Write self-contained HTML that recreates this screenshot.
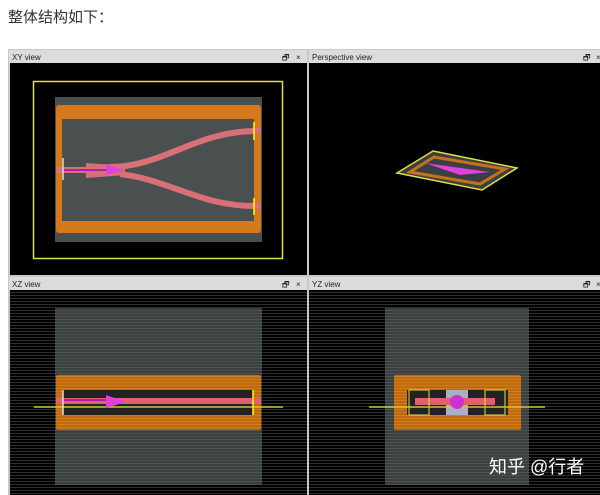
<!DOCTYPE html>
<html><head><meta charset="utf-8"><style>
body{margin:0;width:600px;height:495px;background:#fff;overflow:hidden;position:relative;font-family:"Liberation Sans","Noto Sans CJK SC",sans-serif}
.t{position:absolute;left:8px;top:6px;font-size:15px;color:#333}
svg{position:absolute;left:0;top:0}
</style></head><body>
<div class="t">整体结构如下：</div>
<svg width="600" height="495" viewBox="0 0 600 495">
<defs>
<pattern id="st" width="4" height="3" patternUnits="userSpaceOnUse"><rect width="4" height="3" fill="#000"/><rect y="1" width="4" height="1" fill="#2e2e2e"/></pattern>
<pattern id="sg" width="4" height="3" patternUnits="userSpaceOnUse"><rect width="4" height="3" fill="#3a4040"/><rect y="1" width="4" height="1" fill="#4c5252"/></pattern>
<pattern id="so" width="4" height="3" patternUnits="userSpaceOnUse"><rect width="4" height="3" fill="#c06a10"/><rect y="1" width="4" height="1" fill="#d47c1a"/></pattern>
</defs>
<rect x="8" y="49" width="592" height="446" fill="#c8c8c8"/>
<rect x="9" y="50" width="298" height="13" fill="#dcdcdc"/>
<rect x="309" y="50" width="291" height="13" fill="#dcdcdc"/>
<rect x="9" y="277" width="298" height="13" fill="#dcdcdc"/>
<rect x="309" y="277" width="291" height="13" fill="#dcdcdc"/>
<g font-size="8" fill="#222" font-family="Liberation Sans,sans-serif">
<text x="12" y="60">XY view</text><text x="312" y="60">Perspective view</text>
<text x="12" y="287">XZ view</text><text x="312" y="287">YZ view</text>
<text x="282" y="60">🗗</text><text x="296" y="60">×</text>
<text x="583" y="60">🗗</text><text x="596" y="60">×</text>
<text x="282" y="287">🗗</text><text x="296" y="287">×</text>
<text x="583" y="287">🗗</text><text x="596" y="287">×</text>
</g>
<rect x="10" y="63" width="297" height="212" fill="#000"/>
<rect x="33.5" y="81.5" width="249" height="177" fill="none" stroke="#e0e040" stroke-width="1.5"/>
<rect x="55" y="97" width="207" height="145" fill="#4a5050"/>
<rect x="56" y="105" width="205" height="128" rx="3" fill="#d6791a"/>
<rect x="62" y="119" width="192" height="102" fill="#4a5050"/>
<g fill="none" stroke="#d87078" stroke-width="6">
<path d="M56 170 H88 C100 166 110 168 125 166 C170 160 200 132 254 131 H261"/>
<path d="M120 174 C170 180 200 206 254 206 H261"/>
</g>
<path d="M86 163 L125 166 L125 175 L86 178 Z" fill="#d87078"/>
<line x1="62" y1="170" x2="110" y2="170" stroke="#b020b0" stroke-width="2"/>
<path d="M106 164 L124 170 L106 175 Z" fill="#e040e0"/>
<line x1="63" y1="158" x2="63" y2="180" stroke="#ddd" stroke-width="1.5"/>
<line x1="254" y1="122" x2="254" y2="140" stroke="#ff0" stroke-width="1.5"/>
<line x1="254" y1="198" x2="254" y2="215" stroke="#ff0" stroke-width="1.5"/>
<rect x="309" y="63" width="291" height="212" fill="#000"/>
<path d="M433 151 L517 168 L482 190 L397 173 Z" fill="#3a3f3f" stroke="#e0e040" stroke-width="1.5"/>
<path d="M434 157 L505 169 L480 184 L410 172 Z" fill="none" stroke="#c87020" stroke-width="3"/>
<path d="M425 163 L475 170 L490 172 L460 175 Z" fill="#e040e0"/>
<rect x="10" y="290" width="297" height="205" fill="url(#st)"/>
<rect x="55" y="308" width="207" height="177" fill="url(#sg)"/>
<rect x="56" y="375" width="205" height="55" rx="2" fill="url(#so)"/>
<rect x="63" y="390" width="190" height="25" fill="#222"/>
<rect x="56" y="398" width="205" height="6" fill="#e06070"/>
<line x1="34" y1="407" x2="283" y2="407" stroke="#c8c840" stroke-width="1.5"/>
<line x1="63" y1="400" x2="110" y2="400" stroke="#b020b0" stroke-width="2"/>
<path d="M106 395 L126 402 L106 408 Z" fill="#e040e0"/>
<line x1="63" y1="390" x2="63" y2="415" stroke="#ddd" stroke-width="1.5"/>
<line x1="253" y1="390" x2="253" y2="415" stroke="#ff0" stroke-width="1.5"/>
<rect x="309" y="290" width="291" height="205" fill="url(#st)"/>
<rect x="385" y="308" width="144" height="177" fill="url(#sg)"/>
<rect x="394" y="375" width="127" height="55" rx="2" fill="url(#so)"/>
<rect x="407" y="390" width="101" height="25" fill="#222"/>
<rect x="446" y="390" width="22" height="25" fill="#aab0c0"/>
<rect x="415" y="398" width="80" height="7" fill="#e06070"/>
<rect x="409" y="390" width="20" height="25" fill="none" stroke="#e0e040"/>
<rect x="485" y="390" width="20" height="25" fill="none" stroke="#e0e040"/>
<line x1="369" y1="407" x2="545" y2="407" stroke="#c8c840" stroke-width="1.5"/>
<circle cx="457" cy="402" r="7" fill="#d030d0"/>
<text x="489" y="473" font-size="18" fill="#fff" font-family="Liberation Sans,Noto Sans CJK SC,sans-serif">知乎 @行者</text>
</svg>
</body></html>
